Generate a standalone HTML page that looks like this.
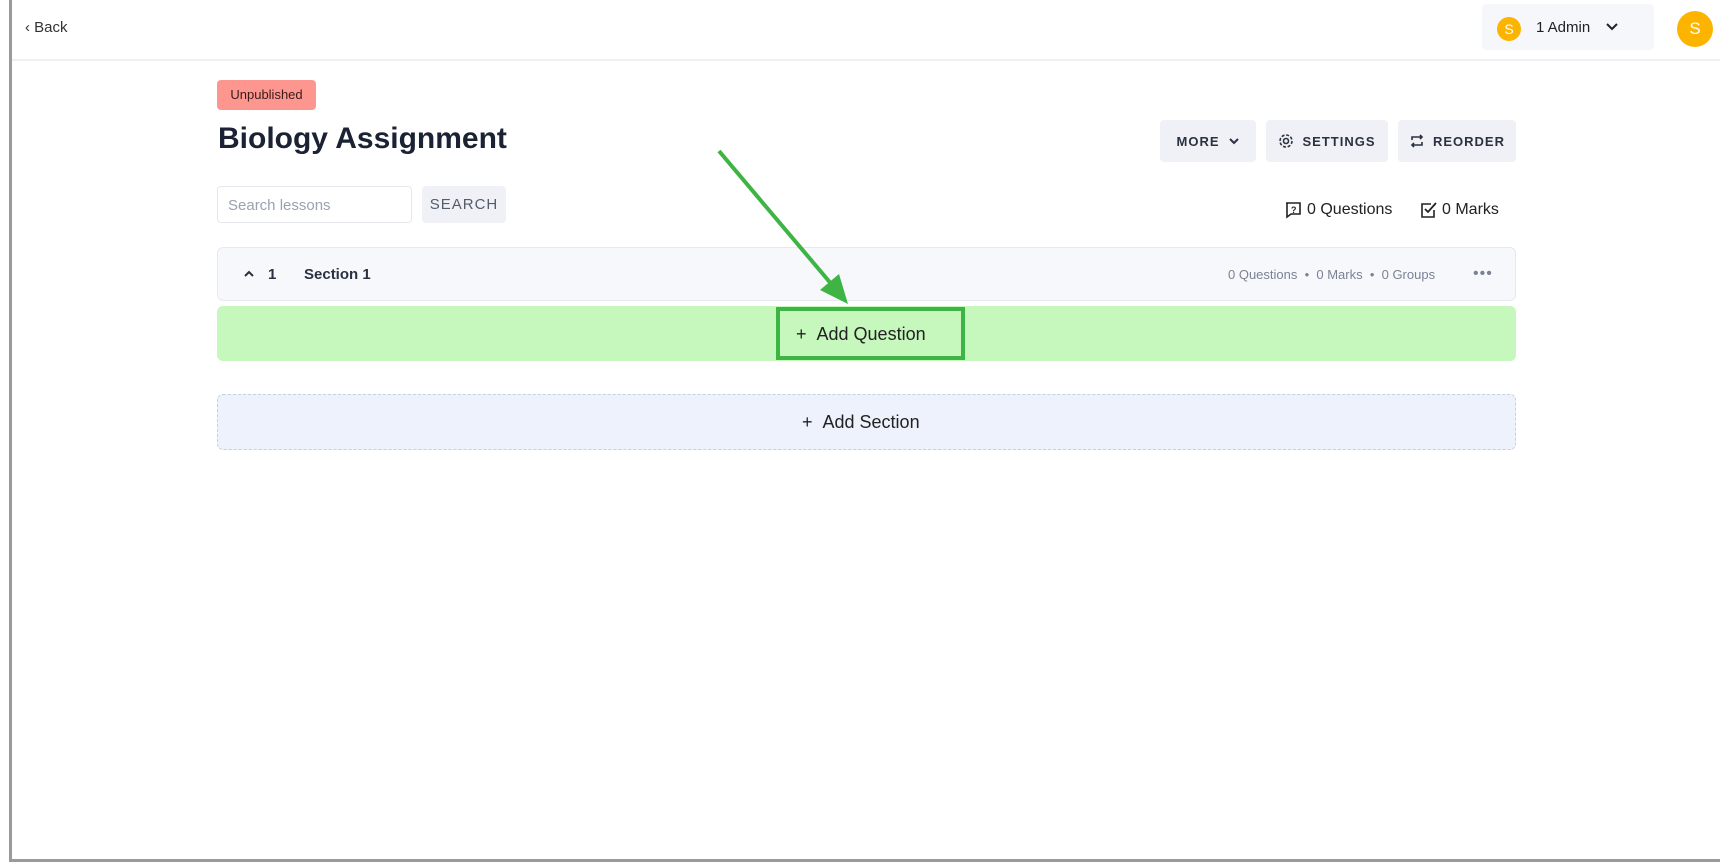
<!DOCTYPE html>
<html><head><meta charset="utf-8"><style>
*{box-sizing:border-box;margin:0;padding:0}
body{width:1720px;height:867px;background:#fff;font-family:"Liberation Sans",sans-serif;color:#1f2937;position:relative;overflow:hidden}
.abs{position:absolute}
.frame-l{left:9px;top:0;width:3px;height:862px;background:#9a9a9a}
.frame-b{left:9px;top:859px;width:1711px;height:3px;background:#9a9a9a}
.hdr{left:12px;top:0;right:0;height:61px;border-bottom:2px solid #eef0f3}
.btn{background:#eff1f6;border-radius:4px;font-weight:bold;font-size:13px;letter-spacing:1px;color:#2a3140;display:flex;align-items:center;justify-content:center;gap:8px}
</style></head><body>
<div class="abs frame-l"></div><div class="abs frame-b"></div>
<div class="abs hdr"></div>
<div class="abs" style="left:25px;top:19px;font-size:15px;color:#333">‹ Back</div>
<div class="abs" style="left:1482px;top:4px;width:172px;height:46px;background:#f6f7fa;border-radius:4px"></div>
<div class="abs" style="left:1497px;top:17px;width:24px;height:24px;border-radius:50%;background:#fdb400;color:#fff;font-size:14px;text-align:center;line-height:24px">S</div>
<div class="abs" style="left:1536px;top:19px;font-size:15px;color:#222">1 Admin</div>
<svg class="abs" style="left:1605px;top:22px" width="14" height="10"><path d="M2 2l5 5 5-5" stroke="#222" stroke-width="2" fill="none"/></svg>
<div class="abs" style="left:1677px;top:11px;width:36px;height:36px;border-radius:50%;background:#fdb400;color:#fff;font-size:17px;text-align:center;line-height:36px">S</div>

<div class="abs" style="left:217px;top:80px;width:99px;height:30px;background:#fd968f;border-radius:4px;font-size:13px;color:#3a1a1a;text-align:center;line-height:30px">Unpublished</div>
<div class="abs" style="left:218px;top:122px;font-size:30px;font-weight:bold;color:#1a2233">Biology Assignment</div>

<div class="abs btn" style="left:1160px;top:120px;width:96px;height:42px">MORE <svg width="12" height="8"><path d="M2 2l4 4 4-4" stroke="#2a3140" stroke-width="2" fill="none"/></svg></div>
<div class="abs btn" style="left:1266px;top:120px;width:122px;height:42px"><svg width="16" height="16" viewBox="0 0 16 16"><circle cx="8" cy="8" r="2.5" stroke="#2a3140" stroke-width="1.6" fill="none"/><circle cx="8" cy="8" r="6" stroke="#2a3140" stroke-width="1.6" fill="none" stroke-dasharray="3 1.7"/></svg>SETTINGS</div>
<div class="abs btn" style="left:1398px;top:120px;width:118px;height:42px"><svg width="16" height="16" viewBox="0 0 16 16"><path d="M3 7V4h10M11 2l2 2-2 2M13 9v3H3M5 14l-2-2 2-2" stroke="#2a3140" stroke-width="1.6" fill="none"/></svg>REORDER</div>

<div class="abs" style="left:217px;top:186px;width:195px;height:37px;border:1px solid #e6e8ee;border-radius:4px;font-size:15px;color:#9aa2b1;padding:10px 0 0 10px">Search lessons</div>
<div class="abs btn" style="left:422px;top:186px;width:84px;height:37px;font-weight:normal;font-size:15px;color:#555c6a">SEARCH</div>

<svg class="abs" style="left:1284px;top:201px" width="18" height="18" viewBox="0 0 18 18"><path d="M2 2h14v11H7l-4 3V2z" stroke="#222" stroke-width="1.6" fill="none"/><text x="7" y="12" font-size="9" font-weight="bold" fill="#222" font-family="Liberation Sans">?</text></svg>
<div class="abs" style="left:1307px;top:201px;font-size:16px;color:#222">0 Questions</div>
<svg class="abs" style="left:1420px;top:201px" width="18" height="18" viewBox="0 0 18 18"><path d="M14 9v7H2V3h9" stroke="#222" stroke-width="1.6" fill="none"/><path d="M5 8l3 3 8-9" stroke="#222" stroke-width="1.8" fill="none"/></svg>
<div class="abs" style="left:1442px;top:201px;font-size:16px;color:#222">0 Marks</div>

<div class="abs" style="left:217px;top:247px;width:1299px;height:54px;background:#f7f8fc;border:1px solid #e6e9f1;border-radius:6px"></div>
<svg class="abs" style="left:243px;top:270px" width="12" height="8"><path d="M2 6l4-4 4 4" stroke="#2a3140" stroke-width="2" fill="none"/></svg>
<div class="abs" style="left:268px;top:266px;font-size:15px;font-weight:bold;color:#2a3140">1</div>
<div class="abs" style="left:304px;top:266px;font-size:15px;font-weight:bold;color:#2a3140">Section 1</div>
<div class="abs" style="left:1228px;top:267px;font-size:13px;color:#7a8294">0 Questions &nbsp;•&nbsp; 0 Marks &nbsp;•&nbsp; 0 Groups</div>
<div class="abs" style="left:1473px;top:265px;font-size:16px;color:#7a8294;letter-spacing:1px">•••</div>

<div class="abs" style="left:217px;top:306px;width:1299px;height:55px;background:#c6f7bd;border-radius:6px"></div>
<div class="abs" style="left:776px;top:307px;width:189px;height:53px;border:4px solid #3db443"></div>
<div class="abs" style="left:796px;top:324px;font-size:18px;color:#222">+&nbsp;&nbsp;Add Question</div>

<div class="abs" style="left:217px;top:394px;width:1299px;height:56px;background:#eef2fd;border:1px dashed #c8cfe3;border-radius:6px"></div>
<div class="abs" style="left:802px;top:412px;font-size:18px;color:#222">+&nbsp;&nbsp;Add Section</div>

<svg class="abs" style="left:0;top:0" width="1720" height="867"><line x1="719" y1="151" x2="833" y2="286" stroke="#3db443" stroke-width="4"/><polygon points="848,304 820,290 839,274" fill="#3db443"/></svg>
</body></html>
